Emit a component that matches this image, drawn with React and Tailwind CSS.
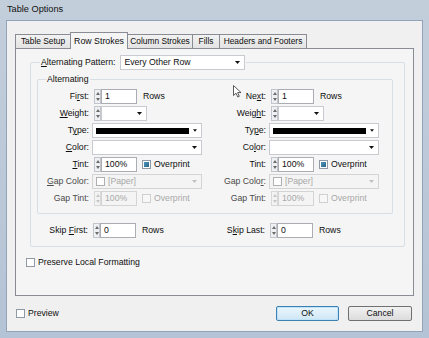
const Up = ({ c = '#555' }) => (
  <svg width="4" height="3" viewBox="0 0 4 3"><path d="M0 3 L2 0 L4 3 Z" fill={c} /></svg>
)
const Down = ({ c = '#555' }) => (
  <svg width="4" height="3" viewBox="0 0 4 3"><path d="M0 0 L4 0 L2 3 Z" fill={c} /></svg>
)
const Arrow = ({ c = '#111' }) => (
  <svg width="5" height="3" viewBox="0 0 5 3"><path d="M0 0 L5 0 L2.5 3 Z" fill={c} /></svg>
)

function Spinner({ disabled }) {
  const c = disabled ? '#c6c6c6' : '#6b6b6b'
  return (
    <div className={`w-[7px] h-[15px] border ${disabled ? 'border-[#d8d8d8] bg-[#f3f3f3]' : 'border-[#c2c6cc] bg-[#eef0f3]'} flex flex-col items-center justify-around py-[1px]`}>
      <Up c={c} />
      <Down c={c} />
    </div>
  )
}

function NumField({ value, disabled, w = 'w-[36px]' }) {
  return (
    <div className="flex">
      <Spinner disabled={disabled} />
      <div className={`${w} h-[15px] border ${disabled ? 'border-[#d4d4d4] bg-[#f4f4f4] text-[#a8a8a8]' : 'border-[#abadb3] bg-white'} px-[3px] flex items-center`}>
        {value}
      </div>
    </div>
  )
}

function Select({ children, w = 'w-[110px]', disabled }) {
  return (
    <div className={`${w} h-[15px] border ${disabled ? 'border-[#d4d4d4] bg-[#f4f4f4]' : 'border-[#c8cacf] bg-white'} flex items-center pl-[3px] pr-[4px] gap-[4px]`}>
      <div className="flex-1 flex items-center gap-[3px]">{children}</div>
      <Arrow c={disabled ? '#c0c0c0' : '#111'} />
    </div>
  )
}

function Check({ on, disabled }) {
  return (
    <div className={`w-[9px] h-[9px] border ${disabled ? 'border-[#d0d0d0] bg-[#f7f7f7]' : 'border-[#8f9aa5] bg-white'} p-[1px]`}>
      {on && <div className="w-full h-full bg-gradient-to-br from-[#4f95bd] to-[#2c6587]" />}
    </div>
  )
}

function Label({ children, disabled }) {
  return (
    <div className={`w-[54px] pr-[3px] text-right whitespace-nowrap ${disabled ? 'text-[#4a4a4a]' : ''}`}>{children}</div>
  )
}

const u = (s) => <span className="underline underline-offset-1">{s}</span>

function Column({ labels }) {
  return (
    <div className="w-[177px] flex flex-col gap-[2px]">
      <div className="flex items-center h-[15px]">
        <Label>{labels.first}</Label>
        <div className="ml-[2px] flex items-center">
          <NumField value="1" />
          <span className="ml-[6px]">Rows</span>
        </div>
      </div>
      <div className="flex items-center h-[15px]">
        <Label>{labels.weight}</Label>
        <div className="ml-[2px] flex">
          <Spinner />
          <div className="w-[46px] h-[15px] border border-[#c8cacf] bg-white flex items-center justify-end pr-[4px]">
            <Arrow />
          </div>
        </div>
      </div>
      <div className="flex items-center h-[15px]">
        <Label>{labels.type}</Label>
        <Select>
          <div className="w-[93px] h-[6px] bg-black" />
        </Select>
      </div>
      <div className="flex items-center h-[15px]">
        <Label>{labels.color}</Label>
        <Select />
      </div>
      <div className="flex items-center h-[15px]">
        <Label>{labels.tint}</Label>
        <div className="ml-[2px] flex items-center">
          <NumField value="100%" />
          <div className="ml-[5px]"><Check on /></div>
          <span className="ml-[3px]">Overprint</span>
        </div>
      </div>
      <div className="flex items-center h-[15px]">
        <Label disabled>{labels.gapColor}</Label>
        <Select disabled>
          <div className="w-[9px] h-[9px] border border-[#b0b0b0] bg-white" />
          <span className="text-[#a8a8a8]">[Paper]</span>
        </Select>
      </div>
      <div className="flex items-center h-[15px]">
        <Label disabled>Gap Tint:</Label>
        <div className="ml-[2px] flex items-center">
          <NumField value="100%" disabled />
          <div className="ml-[5px]"><Check disabled /></div>
          <span className="ml-[3px] text-[#a8a8a8]">Overprint</span>
        </div>
      </div>
    </div>
  )
}

function Tab({ children, w, active }) {
  return (
    <div
      className={`${w} flex items-center justify-center border border-b-0 border-[#898c95] -ml-[1px] first:ml-0 ${
        active
          ? 'h-[17px] bg-[#f5f5f5] relative z-10 -mb-[1px] text-[8.8px]'
          : 'h-[14px] bg-gradient-to-b from-[#f2f2f2] to-[#e3e3e3] text-[8.4px]'
      }`}
    >
      {children}
    </div>
  )
}

export default function App() {
  return (
    <div className="w-[429px] h-[338px] bg-gradient-to-b from-[#c3cedb] to-[#b4c3d5] flex flex-col font-['Liberation_Sans',Arial,sans-serif] text-[8.7px] text-[#0e0e0e] leading-none relative overflow-hidden">
      <div className="h-[20px] flex items-center pl-[7px] text-[9.2px] text-[#111]">Table Options</div>
      <div className="flex-1 ml-[6px] mr-[6px] mb-[6px] bg-[#f0f0f0] border border-[#93a4ba] flex flex-col">
        <div className="pt-[10px] pl-[8px] pr-[8px]">
          <div className="flex items-end h-[17px]">
            <Tab w="w-[56px]">Table Setup</Tab>
            <Tab w="w-[58px]" active>Row Strokes</Tab>
            <Tab w="w-[66px]">Column Strokes</Tab>
            <Tab w="w-[28px]">Fills</Tab>
            <Tab w="w-[88px]">Headers and Footers</Tab>
          </div>
          <div className="h-[248px] border border-[#898c95] bg-[#f5f5f5] pt-[6px] pl-[14px] pr-[12px] flex flex-col">
            <fieldset className="border border-[#d5dfe5] px-[6px] pb-[8px] rounded-[2px]">
              <legend className="ml-[3px] px-[1px] flex items-center gap-[5px]">
                <span>{u('A')}lternating Pattern:</span>
                <Select w="w-[125px]">
                  <span>Every Other Row</span>
                </Select>
              </legend>
              <fieldset className="mt-[4px] border border-[#d5dfe5] rounded-[2px] pb-[7px] mr-[5px]">
                <legend className="ml-[8px] px-[1px] h-[11px] flex items-center">Alternating</legend>
                <div className="flex pt-[4px]">
                  <Column labels={{ first: <>Fi{u('r')}st:</>, weight: <>{u('W')}eight:</>, type: <>T{u('y')}pe:</>, color: <>{u('C')}olor:</>, tint: <>{u('T')}int:</>, gapColor: <>{u('G')}ap Color:</> }} />
                  <Column labels={{ first: <>Ne{u('x')}t:</>, weight: <>Weig{u('h')}t:</>, type: <>Ty{u('p')}e:</>, color: <>Co{u('l')}or:</>, tint: <>Tint:</>, gapColor: <>Gap Colo{u('r')}:</> }} />
                </div>
              </fieldset>
              <div className="flex mt-[9px]">
                <div className="w-[177px] flex items-center h-[15px]">
                  <Label>Skip {u('F')}irst:</Label>
                  <div className="ml-[2px] flex items-center">
                    <NumField value="0" />
                    <span className="ml-[6px]">Rows</span>
                  </div>
                </div>
                <div className="w-[177px] flex items-center h-[15px]">
                  <Label>S{u('k')}ip Last:</Label>
                  <div className="ml-[2px] flex items-center">
                    <NumField value="0" />
                    <span className="ml-[6px]">Rows</span>
                  </div>
                </div>
              </div>
            </fieldset>
            <div className="mt-[11px] -ml-[4px] flex items-center gap-[3px]">
              <Check />
              <span>Preserve Local Formatting</span>
            </div>
          </div>
        </div>
        <div className="flex-1 flex items-center pl-[9px] pr-[10px]">
          <div className="flex items-center gap-[3px]">
            <Check />
            <span>Preview</span>
          </div>
          <div className="ml-auto flex gap-[9px]">
            <div className="w-[63px] h-[15px] rounded-[2px] border border-[#3c7fb1] bg-gradient-to-b from-[#eaf6fd] to-[#cfe6f5] shadow-[inset_0_0_0_1px_#bfe3f8] flex items-center justify-center">OK</div>
            <div className="w-[64px] h-[15px] rounded-[2px] border border-[#707070] bg-gradient-to-b from-[#f2f2f2] to-[#dcdcdc] flex items-center justify-center">Cancel</div>
          </div>
        </div>
      </div>
      <svg className="absolute left-[233px] top-[85px]" width="9" height="13" viewBox="0 0 9 13">
        <path d="M0.5 0.5 L0.5 10.5 L3 8.2 L4.8 12 L6.3 11.3 L4.6 7.6 L8 7.6 Z" fill="#fff" stroke="#333" strokeWidth="0.8" />
      </svg>
    </div>
  )
}
